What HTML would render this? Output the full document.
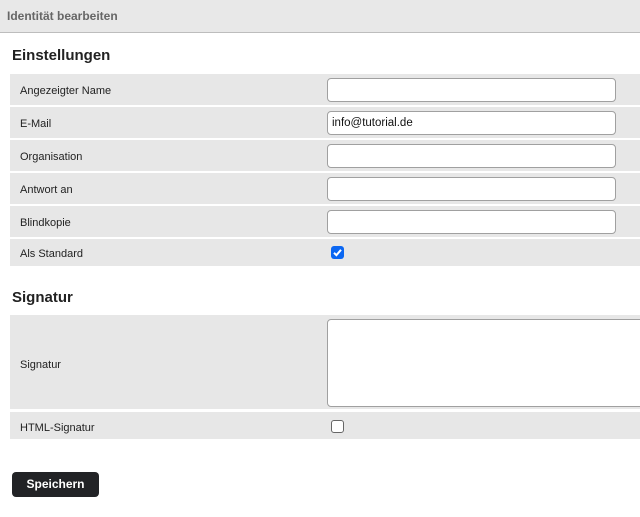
<!DOCTYPE html>
<html><head><meta charset="utf-8"><style>
*{box-sizing:border-box;margin:0;padding:0}
body{width:640px;height:517px;background:#fff;font-family:"Liberation Sans",sans-serif;position:relative;overflow:hidden;color:#222}
.hdr{position:absolute;left:0;top:0;width:640px;height:33px;background:#e8e8e8;border-bottom:1px solid #bdbdbd;font-size:12px;font-weight:bold;color:#666;padding:9px 0 0 7px}
h2{position:absolute;left:12px;font-size:15px;font-weight:bold;color:#222}
.row{position:absolute;left:10px;width:630px;background:#e7e7e7;font-size:11px;color:#222}
.row span{position:absolute;left:10px}
.inp{position:absolute;left:317px;width:289px;height:24px;background:#fff;border:1px solid #a0a0a0;border-radius:4px;font-size:11.5px;padding:5px 0 0 4px;color:#111}
.cb{position:absolute;left:321px;width:13px;height:13px;border-radius:3px}
.btn{position:absolute;left:12px;top:472px;width:87px;height:25px;background:#222326;border-radius:4px;color:#fff;font-size:12px;font-weight:bold;text-align:center;line-height:25px}
</style></head><body>
<div class="hdr">Identität bearbeiten</div>
<h2 style="top:47px">Einstellungen</h2>
<div class="row" style="top:74px;height:31px"><span style="top:11px">Angezeigter Name</span><div class="inp" style="top:4px"></div></div>
<div class="row" style="top:107px;height:31px"><span style="top:11px">E-Mail</span><div class="inp" style="top:4px">info@tutorial.de</div></div>
<div class="row" style="top:140px;height:31px"><span style="top:11px">Organisation</span><div class="inp" style="top:4px"></div></div>
<div class="row" style="top:173px;height:31px"><span style="top:11px">Antwort an</span><div class="inp" style="top:4px"></div></div>
<div class="row" style="top:206px;height:31px"><span style="top:11px">Blindkopie</span><div class="inp" style="top:4px"></div></div>
<div class="row" style="top:239px;height:27px"><span style="top:9px">Als Standard</span>
<div class="cb" style="top:7px;background:#0b67f2"><svg width="13" height="13" viewBox="0 0 13 13"><path d="M3 6.8 L5.4 9.2 L10 3.8" stroke="#fff" stroke-width="2" fill="none"/></svg></div></div>
<h2 style="top:289px">Signatur</h2>
<div class="row" style="top:315px;height:94px"><span style="top:44px">Signatur</span><div class="inp" style="top:4px;width:330px;height:88px"></div></div>
<div class="row" style="top:412px;height:27px"><span style="top:10px">HTML-Signatur</span><div class="cb" style="top:8px;background:#fff;border:1px solid #666"></div></div>
<div class="btn">Speichern</div>
</body></html>
